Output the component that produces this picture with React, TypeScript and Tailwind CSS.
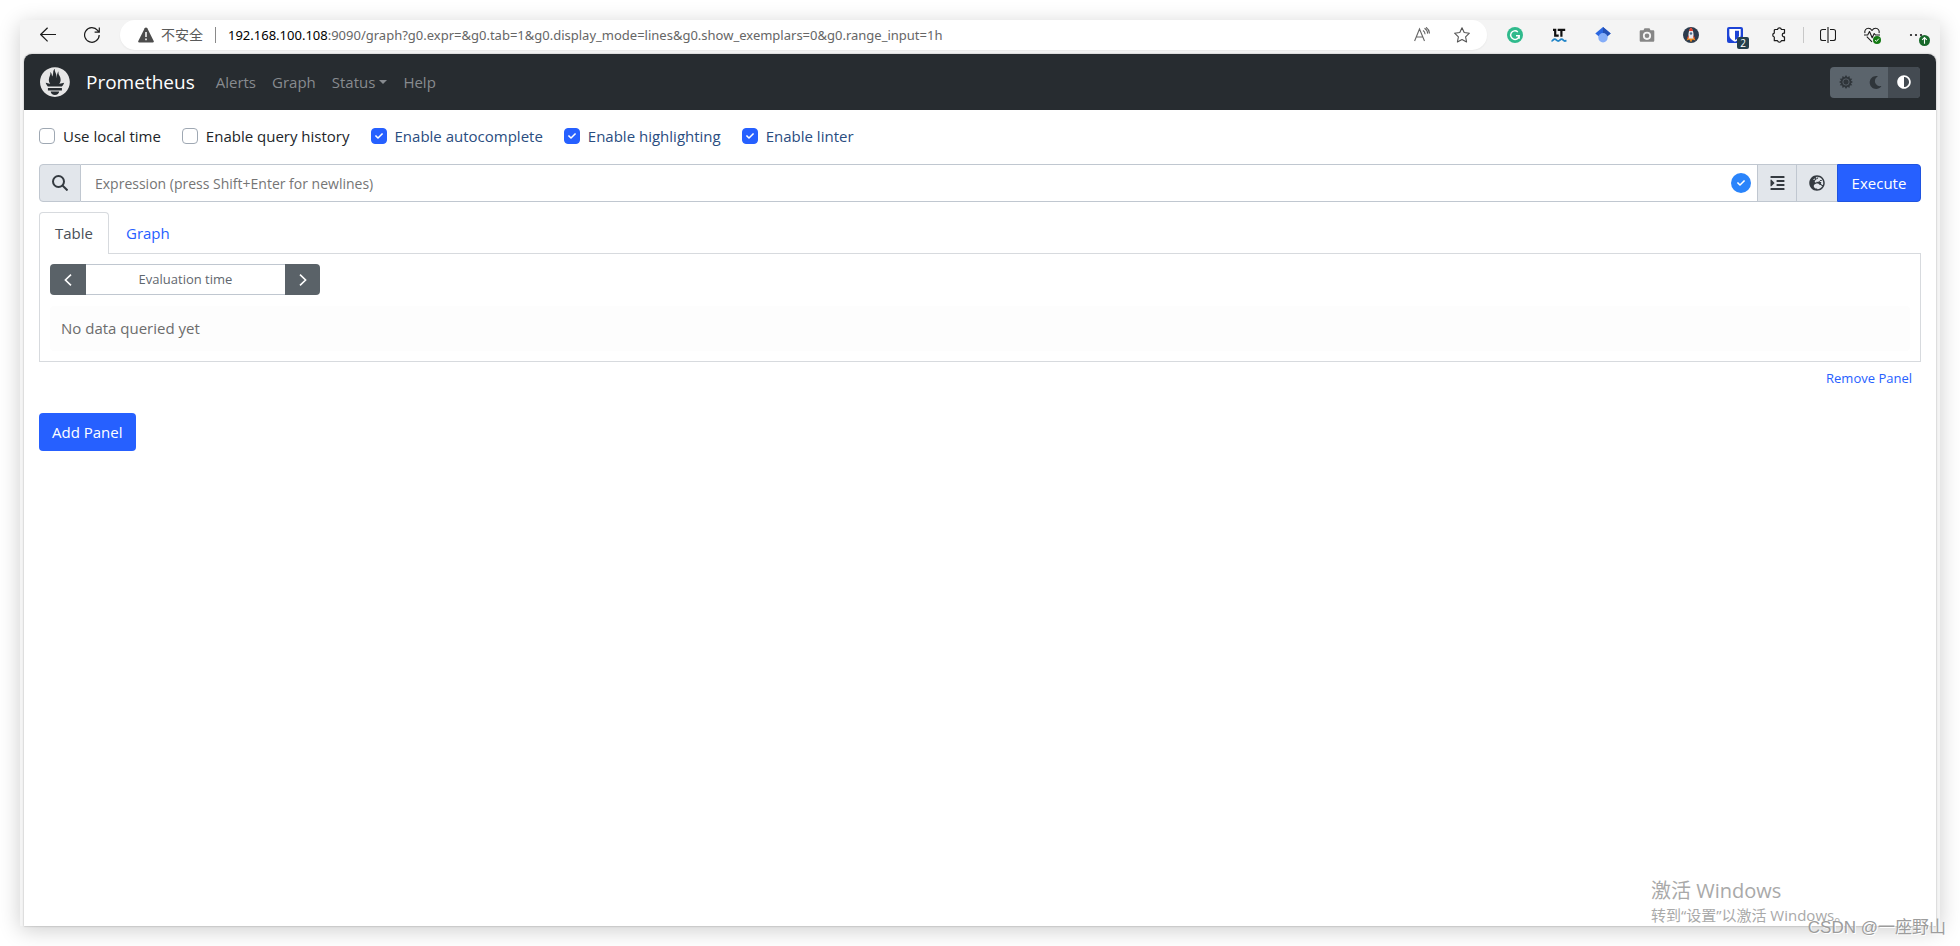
import { useState, type ReactNode } from 'react';
import { FaAdjust, FaCheck, FaGlobeEurope, FaIndent, FaMoon } from 'react-icons/fa';

const ADDRESS_HOST = '192.168.100.108';
const ADDRESS_REST =
  ':9090/graph?g0.expr=&g0.tab=1&g0.display_mode=lines&g0.show_exemplars=0&g0.range_input=1h';

interface IconButtonProps {
  label: string;
  children: ReactNode;
}

function ToolbarButton({ label, children }: IconButtonProps) {
  return (
    <button type="button" aria-label={label} className="relative flex h-8 w-8 items-center justify-center">
      {children}
    </button>
  );
}

function BackIcon() {
  return (
    <svg className="h-4 w-4" viewBox="0 0 16 16" fill="none" stroke="#1b1b1b" strokeWidth={1.2}>
      <path d="M16 7.500H0.700M7.600 0.700L0.700 7.500l6.900 6.900" />
    </svg>
  );
}

function ReloadIcon() {
  return (
    <svg className="h-4 w-4" viewBox="0 0 16 16" fill="none" stroke="#1b1b1b" strokeWidth={1.2}>
      <path d="M15.200 8A7.300 7.300 0 1 1 13.600 3.400L15 5M15.300 0.500V5.200H10.600" />
    </svg>
  );
}

function WarningIcon() {
  return (
    <svg className="h-4 w-4" viewBox="0 0 16 16">
      <path d="M8 0.500c.6 0 1 .3 1.300.8l6.400 12.700c.4.8 0 1.500-.9 1.500H1.200c-.9 0-1.300-.7-.9-1.500L6.700 1.300C7 .8 7.400.5 8 .5z" fill="#4c4c4c" />
      <path d="M8 5v5M8 11.500v1.700" stroke="#fff" strokeWidth={1.5} />
    </svg>
  );
}

function ReadAloudIcon() {
  return (
    <svg className="h-4 w-4" viewBox="0 0 16 16" fill="none" stroke="#666" strokeWidth={1.1}>
      <path d="M0.600 14L5.500 2l5 12M2.300 10h6.500M9 3.500c1.300.8 2 2 2.100 3.700M10.500 1.300c2 1.200 3 3 3.200 5.300M12 0.300c2 1.300 3.300 3.500 3.500 6.200" />
    </svg>
  );
}

function StarIcon() {
  return (
    <svg className="h-4 w-4" viewBox="0 0 16 16" fill="none" stroke="#555" strokeWidth={1.1} strokeLinejoin="round">
      <path d="M8 .8l2.200 4.700 5.200.7-3.800 3.600 1 5.200L8 12.500 3.400 15l1-5.200L.6 6.200l5.200-.7z" />
    </svg>
  );
}

function GrammarIcon() {
  return (
    <svg className="h-4 w-4" viewBox="0 0 16 16">
      <circle cx={8} cy={8} r={8} fill="#2fba8c" />
      <path d="M10.800 4.900A4.300 4.300 0 1 0 12.200 8.800H9M12.200 8.600v3.200" fill="none" stroke="#fff" strokeWidth={1.4} />
    </svg>
  );
}

function LanguageToolIcon() {
  return (
    <svg className="h-4 w-4" viewBox="0 0 16 16" fill="none">
      <path d="M2 2.900h2.200v5.800h3.500M6.700 2.900h7.500M10.400 2.900v6.800" stroke="#111" strokeWidth={2.2} />
      <path d="M.5 14c1.500 0 1.500-1.800 3.200-1.800S5.600 14 7.200 14s1.700-1.800 3.400-1.800 1.700 1.800 3.200 1.800l1.700-.3" stroke="#2386c8" strokeWidth={1.8} />
    </svg>
  );
}

function ScholarIcon() {
  return (
    <svg className="h-4 w-4" viewBox="0 0 16 16">
      <path d="M8 0L.3 6.500 4.500 10h7l4.200-3.500z" fill="#2a66e0" />
      <path d="M8 0l7.700 6.500-4.200 3.500L8 6z" fill="#2450b4" />
      <circle cx={8} cy={10.8} r={4.7} fill="#85adf8" />
    </svg>
  );
}

function CameraIcon() {
  return (
    <svg className="h-4 w-4" viewBox="0 0 16 16">
      <path d="M2 3.300h2.500l1-2h5l1 2H14c.8 0 1.300.5 1.300 1.200v9c0 .8-.5 1.300-1.300 1.300H2c-.8 0-1.300-.5-1.300-1.300v-9C.7 3.800 1.200 3.300 2 3.300z" fill="#868686" />
      <circle cx={8} cy={8.8} r={3.2} fill="#868686" stroke="#f4f4f4" strokeWidth={1.8} />
    </svg>
  );
}

function RocketIcon() {
  return (
    <svg className="h-4 w-4" viewBox="0 0 16 16">
      <circle cx={8} cy={8} r={8} fill="#2c3b4d" />
      <path d="M5.200 10L3.500 13.500l3-1 1.500 3 1.500-3 3 1L10.800 10z" fill="#f08a1d" />
      <path d="M8 1C5.800 3 5.200 6 5.500 11.500h5C10.800 6 10.200 3 8 1z" fill="#e9e9ee" />
      <path d="M8 .6C6.900 1.600 6.300 2.700 6 4h4C9.700 2.700 9.100 1.600 8 .6zM5.500 8l-1.700 3.500 1.800-.4zM10.500 8l1.700 3.500-1.800-.4z" fill="#e1402c" />
      <circle cx={8} cy={6.5} r={1.2} fill="#4a6a8d" />
    </svg>
  );
}

function ShieldIcon() {
  return (
    <svg className="h-4 w-4" viewBox="0 0 16 16">
      <rect width={16} height={16} rx={2} fill="#1d44d6" />
      <path d="M2.300 2h11.400v6.300c0 2.900-2.500 4.900-5.700 6.500-3.200-1.600-5.700-3.600-5.700-6.500z" fill="#fff" />
      <path d="M8 3.700h4v4.700c0 1.900-1.700 3.400-4 4.600z" fill="#1d44d6" />
    </svg>
  );
}

function PuzzleIcon() {
  return (
    <svg className="h-4 w-4" viewBox="0 0 16 16" fill="none" stroke="#1b1b1b" strokeWidth={1.2} strokeLinejoin="round">
      <path d="M4.300 2.500h2.200a2 2 0 0 1 3.900 0h3.100v3.700h-.8a1.900 1.900 0 0 0 0 3.700h.8v3.800h-3.100a2 2 0 0 1-3.900 0H3.300V10a2 2 0 0 1 0-3.900V3.500c0-.6.400-1 1-1z" />
    </svg>
  );
}

function SplitIcon() {
  return (
    <svg className="h-4 w-4" viewBox="0 0 16 16" fill="none" stroke="#1b1b1b" strokeWidth={1.1}>
      <path d="M6 2.500H2.500a2 2 0 0 0-2 2v7a2 2 0 0 0 2 2H6M10 2.500h3.500a2 2 0 0 1 2 2v7a2 2 0 0 1-2 2H10M8 0v16" />
    </svg>
  );
}

function HealthIcon() {
  return (
    <svg className="h-4 w-4" viewBox="0 0 16 16" fill="none" stroke="#1b1b1b" strokeWidth={1.1} strokeLinejoin="round">
      <path d="M1 6.200C.2 3.500 2 1.300 4.300 1.300 6 1.300 7.200 2.200 8 3.500c.8-1.300 2-2.200 3.700-2.200C14 1.300 15.800 3.500 15 6.200M2.800 9.700L8 14.800" />
      <path d="M0 8h3.700l1.800-3.500 2.700 6.300 2-4.300L11.500 8H16" />
    </svg>
  );
}

function SunIcon() {
  return (
    <svg className="h-[14px] w-[14px]" viewBox="0 0 16 16">
      <path
        fill="currentColor"
        d="M8 0l1.700 2.600L12 1.200l.4 2.700 2.700.5L13.600 6.500 16 8l-2.400 1.500 1.500 2.100-2.700.5-.4 2.700-2.300-1.400L8 16l-1.700-2.600L4 14.800l-.4-2.700-2.700-.5 1.500-2.100L0 8l2.400-1.500L.9 4.400l2.700-.5L4 1.200l2.300 1.400z"
      />
      <circle cx={8} cy={8} r={3.6} fill="none" stroke="#5b646c" strokeWidth={1} />
    </svg>
  );
}

function SearchIcon() {
  return (
    <svg className="h-4 w-4" viewBox="0 0 16 16" fill="none" stroke="currentColor" strokeWidth={2}>
      <circle cx={6.5} cy={6.5} r={5.5} />
      <path d="M10.500 10.500l5 5" />
    </svg>
  );
}

function PrometheusLogo() {
  return (
    <svg className="h-[30px] w-[30px]" viewBox="0 0 114 114" role="img" aria-label="Prometheus">
      <path
        fill="#e6e6e6"
        d="M56.667.667C25.372.667 0 26.036 0 57.332s25.372 56.666 56.667 56.666 56.666-25.370 56.666-56.666S87.963.667 56.667.667zm0 106.055c-8.904 0-16.123-5.948-16.123-13.283h32.246c0 7.334-7.219 13.283-16.123 13.283zm26.630-17.683H30.034v-9.657h53.264v9.657zm-.191-14.627H30.190c-.176-.203-.356-.403-.526-.609-5.452-6.620-6.735-10.076-7.982-13.598-.021-.117 6.610 1.354 11.312 2.412 0 0 2.420.56 5.957 1.205-3.397-3.982-5.414-9.044-5.414-14.218 0-11.359 8.712-21.285 5.569-29.308 3.059.249 6.331 6.456 6.552 16.161 3.252-4.494 4.613-12.701 4.613-17.733 0-5.210 3.433-11.262 6.867-11.469-3.061 5.045.793 9.370 4.219 20.099 1.285 4.030 1.121 10.812 2.113 15.113.329-8.933 1.864-21.967 7.532-26.466-2.500 5.668.37 12.760 2.333 16.170 3.168 5.500 5.088 9.668 5.088 17.550 0 5.284-1.951 10.259-5.242 14.148 3.742-.702 6.326-1.335 6.326-1.335l12.151-2.371c.002-.001-1.765 7.261-8.552 14.249z"
      />
    </svg>
  );
}

function BrowserBar() {
  return (
    <div className="flex h-[34px] items-start justify-between bg-[#f4f4f4]">
      <div className="flex h-[30px] w-[100px] shrink-0 items-center gap-3 pl-3">
        <ToolbarButton label="Back"><BackIcon /></ToolbarButton>
        <ToolbarButton label="Reload"><ReloadIcon /></ToolbarButton>
      </div>
      <div className="flex h-[30px] min-w-0 flex-1 items-center rounded-full bg-white pl-[18px] shadow-xs">
        <WarningIcon />
        <span className="ml-[7px] text-sm whitespace-nowrap text-[#5a5a5a]">不安全</span>
        <span className="mx-3 h-4 w-px shrink-0 bg-[#8a8a8a]" />
        {/* editable div because the host is darker than the rest */}
        <div
          role="textbox"
          aria-label="Address"
          contentEditable
          suppressContentEditableWarning
          className="min-w-0 flex-1 truncate pt-px font-['Noto_Sans',sans-serif] text-[13px] text-[#666] outline-none"
        >
          <span className="text-black">{ADDRESS_HOST}</span>
          {ADDRESS_REST}
        </div>
        <div className="flex items-center gap-2 pr-[9px]">
          <ToolbarButton label="Read aloud"><ReadAloudIcon /></ToolbarButton>
          <ToolbarButton label="Add to favorites"><StarIcon /></ToolbarButton>
        </div>
      </div>
      <div className="flex h-[30px] shrink-0 items-center gap-3 pr-2 pl-3">
        <ToolbarButton label="Grammarly"><GrammarIcon /></ToolbarButton>
        <ToolbarButton label="LanguageTool"><LanguageToolIcon /></ToolbarButton>
        <ToolbarButton label="Scholar"><ScholarIcon /></ToolbarButton>
        <ToolbarButton label="Screenshot"><CameraIcon /></ToolbarButton>
        <ToolbarButton label="Rocket"><RocketIcon /></ToolbarButton>
        <ToolbarButton label="Bitwarden">
          <ShieldIcon />
          <span className="absolute right-[2px] bottom-[2px] flex h-3 w-3 items-center justify-center rounded-xs bg-[#243f4c] text-[10px] text-white">
            2
          </span>
        </ToolbarButton>
        <ToolbarButton label="Extensions"><PuzzleIcon /></ToolbarButton>
        <span className="-mx-1 h-4 w-px bg-[#c8c8c8]" />
        <ToolbarButton label="Split screen"><SplitIcon /></ToolbarButton>
        <ToolbarButton label="Browser essentials">
          <HealthIcon />
          <svg className="absolute right-[7px] bottom-[7px] h-2 w-2" viewBox="0 0 8 8">
            <circle cx={4} cy={4} r={4} fill="#137a13" />
            <path d="M2.200 4.200l1.200 1.200 2.400-2.700" fill="none" stroke="#fff" />
          </svg>
        </ToolbarButton>
        <ToolbarButton label="Settings and more">
          <svg className="h-4 w-4" viewBox="0 0 16 16" fill="#1b1b1b">
            <circle cx={3} cy={8} r={1.1} />
            <circle cx={8} cy={8} r={1.1} />
            <circle cx={13} cy={8} r={1.1} />
          </svg>
          <svg className="absolute right-[2px] bottom-[5px] h-[11px] w-[11px]" viewBox="0 0 12 12">
            <circle cx={6} cy={6} r={6} fill="#17692a" />
            <path d="M6 9.500V3M3.500 5.300L6 2.800l2.500 2.500" fill="none" stroke="#fff" strokeWidth={1.2} />
          </svg>
        </ToolbarButton>
      </div>
    </div>
  );
}

function NavBar() {
  return (
    <nav className="flex h-14 items-center justify-between rounded-t-lg bg-[#272c30] px-4">
      <div className="flex items-center">
        <PrometheusLogo />
        <a href="#" className="ml-4 text-[19px] text-white">Prometheus</a>
        <div className="ml-[21px] flex items-center gap-4 text-[15px] text-[#878b8f]">
          <a href="#alerts">Alerts</a>
          <a href="#graph">Graph</a>
          <button type="button" className="flex items-center gap-1">
            Status
            <span className="border-x-4 border-t-4 border-x-transparent border-t-[#878b8f]" />
          </button>
          <a href="#help">Help</a>
        </div>
      </div>
      <div className="flex h-[31px] overflow-hidden rounded-sm bg-[#5b646c] text-[#2f353a]">
        <button type="button" aria-label="Light theme" className="flex w-8 items-center justify-center">
          <SunIcon />
        </button>
        <button type="button" aria-label="Dark theme" className="flex w-[26px] items-center justify-center">
          <FaMoon className="h-[13px] w-[13px]" />
        </button>
        <button type="button" aria-label="Browser theme" className="flex w-8 items-center justify-center bg-[#444b52] text-white">
          <FaAdjust className="h-[14px] w-[14px]" />
        </button>
      </div>
    </nav>
  );
}

interface OptionProps {
  id: string;
  label: string;
  initial?: boolean;
}

function Option({ id, label, initial = false }: OptionProps) {
  const [checked, setChecked] = useState(initial);

  return (
    <div className="flex items-center gap-2">
      <span className="relative flex h-4 w-4">
        <input
          id={id}
          type="checkbox"
          checked={checked}
          onChange={(e) => setChecked(e.target.checked)}
          className="h-4 w-4 appearance-none rounded-sm border border-[#9fa8b3] bg-white checked:border-[#2660ff] checked:bg-[#2660ff]"
        />
        {checked && <FaCheck className="pointer-events-none absolute top-1 left-1 h-2 w-2 text-white" />}
      </span>
      <label htmlFor={id} className={checked ? 'text-[#2a4d7f]' : 'text-[#212529]'}>
        {label}
      </label>
    </div>
  );
}

function ExpressionInput() {
  return (
    <div className="flex h-[38px]">
      <label
        htmlFor="expression"
        aria-label="Expression"
        className="flex w-[42px] shrink-0 items-center justify-center rounded-l-sm border border-[#c0c7d0] bg-[#e2e6eb] text-[#343a40]"
      >
        <SearchIcon />
      </label>
      <div className="flex min-w-0 flex-1 items-center border-y border-[#c0c7d0] pr-[6px] pl-[14px]">
        <input
          id="expression"
          type="text"
          placeholder="Expression (press Shift+Enter for newlines)"
          className="min-w-0 flex-1 pt-px text-sm outline-none placeholder:text-[#757575]"
        />
        <span className="flex h-5 w-5 items-center justify-center rounded-full bg-[#2a84fb] text-white">
          <FaCheck className="h-2 w-2" />
        </span>
      </div>
      <button
        type="button"
        aria-label="Format expression"
        className="flex w-[39px] items-center justify-center border border-r-0 border-[#c0c7d0] bg-[#e2e6eb] text-[#343a40]"
      >
        <FaIndent className="h-4 w-[15px]" />
      </button>
      <button
        type="button"
        aria-label="Open metrics explorer"
        className="flex w-[41px] items-center justify-center border border-r-0 border-[#c0c7d0] bg-[#e2e6eb] text-[#343a40]"
      >
        <FaGlobeEurope className="h-4 w-4" />
      </button>
      <button type="button" className="w-[84px] rounded-r-sm border border-[#1f54e0] bg-[#2660ff] text-[15px] text-white">
        Execute
      </button>
    </div>
  );
}

function QueryPanel() {
  return (
    <section>
      <ExpressionInput />
      <div role="tablist" className="mt-[10px] flex text-[15px]">
        <button
          type="button"
          role="tab"
          aria-selected="true"
          className="relative z-10 -mb-px h-[42px] w-[70px] rounded-t-sm border border-b-0 border-[#d7dade] bg-white text-[#495057]"
        >
          Table
        </button>
        <button
          type="button"
          role="tab"
          aria-selected="false"
          className="-mb-px h-[42px] border-t border-transparent px-[17px] text-[#2660ff]"
        >
          Graph
        </button>
      </div>
      <div role="tabpanel" className="border border-[#d7dade] p-[10px]">
        <div className="flex h-[31px] w-[270px] text-[13px]">
          <button
            type="button"
            aria-label="Decrease time"
            className="flex w-9 items-center justify-center rounded-l-sm bg-[#5a6268] text-white"
          >
            <svg className="h-3 w-2" viewBox="0 0 8 12" fill="none" stroke="currentColor" strokeWidth={1.6}>
              <path d="M7 .6L1.400 6 7 11.400" />
            </svg>
          </button>
          <input
            type="text"
            aria-label="Evaluation time"
            placeholder="Evaluation time"
            className="min-w-0 flex-1 border-y border-[#c0c7d0] text-center outline-none placeholder:text-[#5f676e]"
          />
          <button
            type="button"
            aria-label="Increase time"
            className="flex w-[35px] items-center justify-center rounded-r-sm bg-[#5a6268] text-white"
          >
            <svg className="h-3 w-2" viewBox="0 0 8 12" fill="none" stroke="currentColor" strokeWidth={1.6}>
              <path d="M1 .6L6.600 6 1 11.400" />
            </svg>
          </button>
        </div>
        <div className="mt-[11px] flex h-[45px] items-center rounded-sm bg-[#fdfdfd] px-[11px] text-[15px] text-[#6c6c6c]">
          No data queried yet
        </div>
      </div>
      <div className="flex justify-end pt-[5px] pr-[9px]">
        <button type="button" className="text-[13px] leading-[22px] text-[#2660ff]">
          Remove Panel
        </button>
      </div>
    </section>
  );
}

function Watermarks() {
  return (
    <div className="pointer-events-none">
      <div className="absolute right-[110px] bottom-[21px] w-[199px] whitespace-nowrap text-[#a9a9a9]">
        <p className="text-[20px] leading-7">激活 Windows</p>
        <p className="text-[15px] leading-5">转到“设置”以激活 Windows。</p>
      </div>
      <p className="absolute right-[14px] bottom-2 font-['Liberation_Sans','Noto_Sans_CJK_SC',sans-serif] text-[17px] leading-5 whitespace-nowrap text-[#9c9c9c] text-shadow-[1px_1px_0_#ffffff]">
        CSDN @一座野山
      </p>
    </div>
  );
}

export default function App() {
  return (
    <div className="relative min-h-screen bg-white p-5 font-['Open_Sans','Noto_Sans_CJK_SC',sans-serif]">
      <div className="flex min-h-[calc(100vh-40px)] flex-col rounded-t-sm bg-[#f4f4f4] shadow-[0_4px_22px_rgba(0,0,0,0.2)]">
        <BrowserBar />
        <div className="mx-1 flex flex-1 flex-col rounded-t-lg bg-white shadow-[0_0_2px_rgba(0,0,0,0.35)]">
          <NavBar />
          <main className="px-[15px]">
            <div className="mt-[14px] mb-4 flex h-6 items-center gap-[21px] text-[15px]">
              <Option id="local-time" label="Use local time" />
              <Option id="query-history" label="Enable query history" />
              <Option id="autocomplete" label="Enable autocomplete" initial />
              <Option id="highlighting" label="Enable highlighting" initial />
              <Option id="linter" label="Enable linter" initial />
            </div>
            <QueryPanel />
            <button type="button" className="mt-6 h-[38px] rounded-sm bg-[#2660ff] px-[13px] text-[15px] text-white">
              Add Panel
            </button>
          </main>
        </div>
      </div>
      <Watermarks />
    </div>
  );
}
